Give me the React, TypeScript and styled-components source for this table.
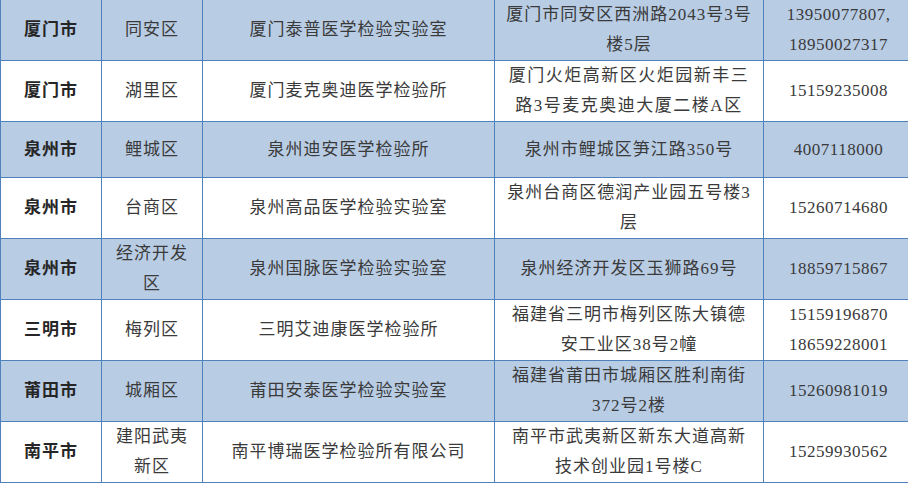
import React from 'react';
import styled, { createGlobalStyle } from 'styled-components';

const GlobalStyle = createGlobalStyle`
    html, body {
        margin: 0;
        padding: 0;
        background: #ffffff;
        overflow: hidden;
    }
`;

const Page = styled.div`
    width: 908px;
    height: 488px;
    overflow: hidden;
    background: #ffffff;
`;

const Table = styled.table`
    width: 913px;
    table-layout: fixed;
    border-collapse: collapse;
`;

const Col = styled.col<{ $width: number }>`
    width: ${p => p.$width}px;
`;

const Row = styled.tr<{ $shaded: boolean }>`
    background-color: ${p => (p.$shaded ? '#b8cce4' : '#ffffff')};

    &:first-child td {
        border-top: none;
    }
`;

const Cell = styled.td<{ $bold?: boolean; $spacing?: number }>`
    height: 55px;
    padding: 0 10px;
    border: 1px solid #4f81bd;
    text-align: center;
    vertical-align: middle;
    font-family: "Liberation Serif", "Noto Sans CJK SC", serif;
    font-size: 17px;
    line-height: 30px;
    letter-spacing: ${p => (p.$spacing ?? 1)}px;
    font-weight: ${p => (p.$bold ? 700 : 400)};
    color: ${p => (p.$bold ? '#262626' : '#3a3a3a')};
`;

interface Lab {
    city: string,
    district: string,
    name: string,
    address: string,
    phones: string[],
    addressSpacing?: number
}

const colWidths = [101, 101, 292, 269, 150];

const labs: Lab[] = [
    { city: '厦门市', district: '同安区', name: '厦门泰普医学检验实验室', address: '厦门市同安区西洲路2043号3号楼5层', phones: ['13950077807,', '18950027317'] },
    { city: '厦门市', district: '湖里区', name: '厦门麦克奥迪医学检验所', address: '厦门火炬高新区火炬园新丰三路3号麦克奥迪大厦二楼A区', phones: ['15159235008'], addressSpacing: 1.5 },
    { city: '泉州市', district: '鲤城区', name: '泉州迪安医学检验所', address: '泉州市鲤城区笋江路350号', phones: ['4007118000'] },
    { city: '泉州市', district: '台商区', name: '泉州高品医学检验实验室', address: '泉州台商区德润产业园五号楼3层', phones: ['15260714680'] },
    { city: '泉州市', district: '经济开发区', name: '泉州国脉医学检验实验室', address: '泉州经济开发区玉狮路69号', phones: ['18859715867'] },
    { city: '三明市', district: '梅列区', name: '三明艾迪康医学检验所', address: '福建省三明市梅列区陈大镇德安工业区38号2幢', phones: ['15159196870', '18659228001'] },
    { city: '莆田市', district: '城厢区', name: '莆田安泰医学检验实验室', address: '福建省莆田市城厢区胜利南街372号2楼', phones: ['15260981019'] },
    { city: '南平市', district: '建阳武夷新区', name: '南平博瑞医学检验所有限公司', address: '南平市武夷新区新东大道高新技术创业园1号楼C', phones: ['15259930562'] },
];

export default function App() {
    return (
        <Page>
            <GlobalStyle />
            <Table>
                <colgroup>
                    {colWidths.map((w, i) => <Col key={i} $width={w} />)}
                </colgroup>
                <tbody>
                    {labs.map((lab, i) => (
                        <Row key={i} $shaded={i % 2 === 0}>
                            <Cell $bold>{lab.city}</Cell>
                            <Cell>{lab.district}</Cell>
                            <Cell>{lab.name}</Cell>
                            <Cell $spacing={lab.addressSpacing}>{lab.address}</Cell>
                            <Cell $spacing={0.5}>
                                {lab.phones.map((p, j) => (
                                    <React.Fragment key={j}>
                                        {j > 0 && <br />}
                                        {p}
                                    </React.Fragment>
                                ))}
                            </Cell>
                        </Row>
                    ))}
                </tbody>
            </Table>
        </Page>
    );
}
